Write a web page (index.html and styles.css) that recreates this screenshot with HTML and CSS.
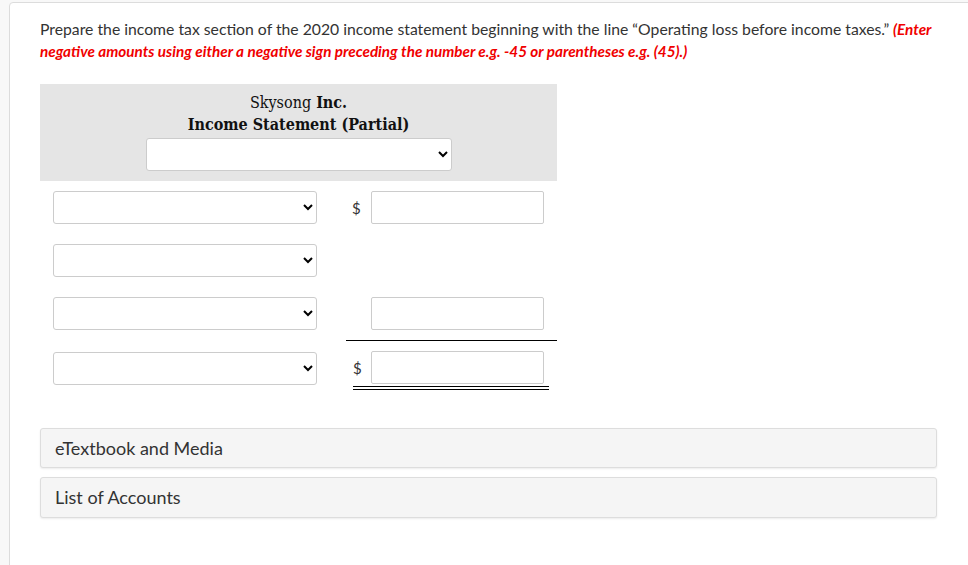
FILE: index.html
```html
<!DOCTYPE html>
<html lang="en">
<head>
<meta charset="utf-8">
<title>Income Statement (Partial)</title>
<link rel="stylesheet" href="styles.css">
</head>
<body>
<div class="card">
  <p class="question">Prepare the income tax section of the 2020 income statement beginning with the line “Operating loss before income taxes.” <em class="hint">(Enter negative amounts using either a negative sign preceding the number e.g. -45 or parentheses e.g. (45).)</em></p>

  <div class="statement">
    <div class="stmt-head">
      <div class="company"><span class="co-name">Skysong</span> Inc.</div>
      <div class="stmt-title">Income Statement (Partial)</div>
      <select class="period"><option></option></select>
    </div>

    <div class="row">
      <select class="acct"><option></option></select>
      <div class="amt">
        <span class="dollar">$</span>
        <input class="num" type="text">
      </div>
    </div>

    <div class="row">
      <select class="acct"><option></option></select>
    </div>

    <div class="row row-sub">
      <select class="acct"><option></option></select>
      <div class="amt amt-sub">
        <span class="dollar"></span>
        <input class="num" type="text">
      </div>
    </div>

    <div class="row row-total">
      <select class="acct"><option></option></select>
      <div class="amt amt-total">
        <span class="dollar">$</span>
        <input class="num" type="text">
      </div>
    </div>
  </div>

  <div class="panel">eTextbook and Media</div>
  <div class="panel">List of Accounts</div>
</div>
</body>
</html>
```
FILE: styles.css
```css
html, body {
  margin: 0;
  padding: 0;
  overflow: hidden;
  height: 100%;
}
body {
  background: #f8f8f8;
  font-family: Lato, "Liberation Sans", sans-serif;
  color: #333;
}
.card {
  margin: 2px 0 0 9px;
  width: 1000px;
  min-height: 700px;
  background: #fff;
  border: 1px solid #dcdcdc;
  border-radius: 4px;
  padding: 15px 30px 0 30px;
  box-sizing: border-box;
}
.question {
  width: 897px;
  margin: 0;
  font-size: 15.75px;
  line-height: 22px;
}
.hint {
  color: #f00000;
  font-weight: bold;
  font-style: italic;
  font-size: 15.25px;
}
.statement {
  margin-top: 22px;
  width: 517px;
}
.stmt-head {
  background: #e5e5e5;
  padding: 8px 0 10px;
  display: flex;
  flex-direction: column;
  align-items: center;
  font-family: "DejaVu Serif Condensed", "DejaVu Serif", serif;
  font-weight: bold;
  font-size: 16px;
  line-height: 22px;
  color: #111;
}
.co-name {
  font-weight: normal;
}
.period {
  margin-top: 2px;
  width: 306px;
  height: 33px;
}
select {
  border: 1px solid #cccccc;
  border-radius: 3px;
  background: #fff;
  box-sizing: border-box;
  font-family: Lato, sans-serif;
}
.row {
  display: flex;
  align-items: flex-start;
  margin-top: 20px;
}
.stmt-head + .row {
  margin-top: 10px;
}
.acct {
  margin-left: 13px;
  width: 264px;
  height: 33px;
}
.amt {
  margin-left: 29px;
  width: 211px;
  display: flex;
  align-items: center;
  box-sizing: border-box;
}
.dollar {
  width: 19px;
  padding-left: 6px;
  font-size: 15px;
  color: #333;
}
.num {
  width: 173px;
  height: 33px;
  box-sizing: border-box;
  border: 1px solid #cccccc;
  border-radius: 2px;
  margin: 0;
}
.amt-sub {
  padding-bottom: 10px;
  border-bottom: 1px solid #000;
}
.row-total {
  margin-top: 11px;
}
.amt-total {
  margin-left: 36px;
  width: 196px;
  padding-bottom: 2px;
  border-bottom: 4px double #000;
}
.amt-total .dollar {
  width: 18px;
  padding-left: 0;
}
.amt-total .num {
  margin-top: -1px;
}
.panel {
  width: 897px;
  box-sizing: border-box;
  background: #f5f5f5;
  border: 1px solid #dddddd;
  border-radius: 3px;
  box-shadow: 0 1px 2px rgba(0,0,0,0.08);
  padding: 0 14px;
  height: 40px;
  line-height: 38px;
  font-size: 18px;
  color: #333;
}
.statement + .panel {
  margin-top: 38px;
}
.panel + .panel {
  margin-top: 9px;
  height: 41px;
  line-height: 39px;
}
```
